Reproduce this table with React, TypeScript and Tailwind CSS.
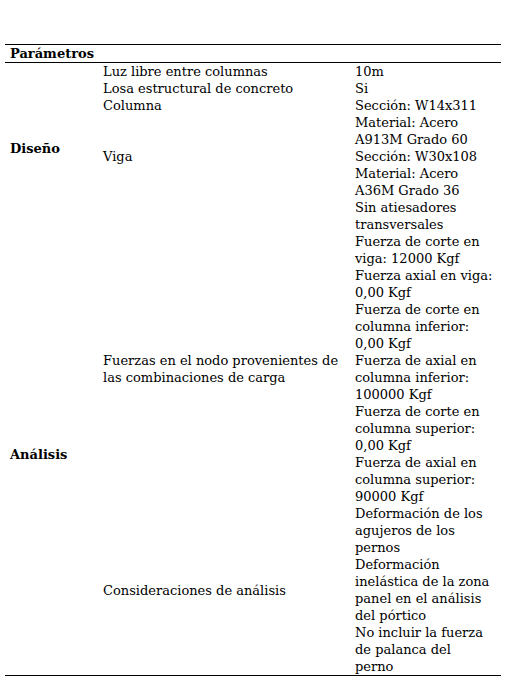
const serif = { fontFamily: '"DejaVu Serif", "Liberation Serif", serif' };

type Row = { item: string; values: string[]; middle?: boolean };

const diseno: Row[] = [
  { item: "Luz libre entre columnas", values: ["10m"] },
  { item: "Losa estructural de concreto", values: ["Si"] },
  { item: "Columna", values: ["Sección: W14x311", "Material: Acero A913M Grado 60"] },
  {
    item: "Viga",
    values: ["Sección: W30x108", "Material: Acero A36M Grado 36", "Sin atiesadores transversales"],
  },
];

const analisis: Row[] = [
  {
    item: "Fuerzas en el nodo provenientes de las combinaciones de carga",
    middle: true,
    values: [
      "Fuerza de corte en viga: 12000 Kgf",
      "Fuerza axial en viga: 0,00 Kgf",
      "Fuerza de corte en columna inferior: 0,00 Kgf",
      "Fuerza de axial en columna inferior: 100000 Kgf",
      "Fuerza de corte en columna superior: 0,00 Kgf",
      "Fuerza de axial en columna superior: 90000 Kgf",
    ],
  },
  {
    item: "Consideraciones de análisis",
    middle: true,
    values: [
      "Deformación de los agujeros de los pernos",
      "Deformación inelástica de la zona panel en el análisis del pórtico",
      "No incluir la fuerza de palanca del perno",
    ],
  },
];

function Group({ title, rows }: { title: string; rows: Row[] }) {
  return (
    <>
      {rows.map((row, i) => (
        <tr key={row.item}>
          {i === 0 && (
            <td rowSpan={rows.length} className="px-[5px] align-middle font-bold">
              {title}
            </td>
          )}
          <td className={`px-[5px] ${row.middle ? "align-middle" : "align-top"}`}>{row.item}</td>
          <td className="pl-[5px] pr-[8px] align-top">
            {row.values.map((v) => (
              <div key={v}>{v}</div>
            ))}
          </td>
        </tr>
      ))}
    </>
  );
}

export default function App() {
  return (
    <div className="min-h-screen bg-white pt-[44px] pl-[5px] pr-[6px] text-black" style={serif}>
      <table className="w-[496px] table-fixed border-collapse text-[13px] leading-[17px]">
        <colgroup>
          <col className="w-[93px]" />
          <col className="w-[252px]" />
          <col className="w-[151px]" />
        </colgroup>
        <thead>
          <tr className="border-t border-b border-black">
            <th className="px-[5px] text-left font-bold">Parámetros</th>
            <th />
            <th />
          </tr>
        </thead>
        <tbody className="border-b border-black">
          <Group title="Diseño" rows={diseno} />
          <Group title="Análisis" rows={analisis} />
        </tbody>
      </table>
    </div>
  );
}
